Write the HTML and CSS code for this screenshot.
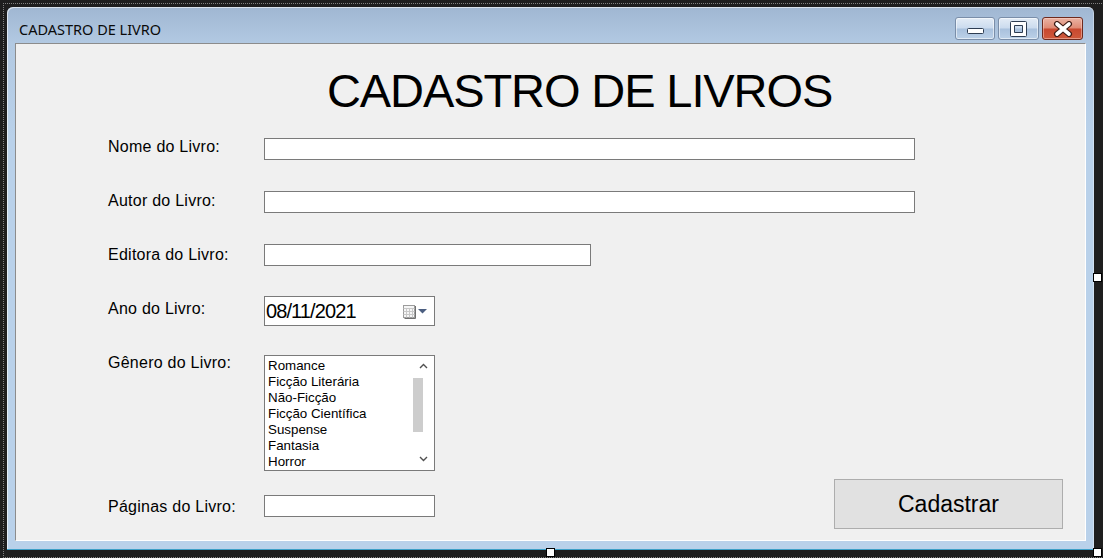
FILE: index.html
```html
<!DOCTYPE html>
<html lang="pt-BR">

<head>
    <meta charset="UTF-8">
    <meta name="viewport" content="width=device-width, initial-scale=1.0">
    <title>Cadastro de Livro</title>
    <link rel="stylesheet" href="styles.css">
</head>

<body>
    <div class="designer">
        <div class="window">
            <div class="title-bar">
                <span class="title-text">CADASTRO DE LIVRO</span>
                <div class="window-buttons">
                    <button class="win-btn win-min" aria-label="Minimizar">
                        <svg width="17" height="6" viewBox="0 0 17 6">
                            <rect x="0.5" y="0.5" width="16" height="5" rx="1" fill="#fff" stroke="#2e3d52"/>
                        </svg>
                    </button>
                    <button class="win-btn win-max" aria-label="Maximizar">
                        <svg width="17" height="16" viewBox="0 0 17 16">
                            <path d="M1.5 0.5h14a1 1 0 0 1 1 1v13a1 1 0 0 1 -1 1h-14a1 1 0 0 1 -1 -1v-13a1 1 0 0 1 1 -1z M4.5 4.5v7h8v-7z"
                                  fill="#fff" fill-rule="evenodd" stroke="#2e3d52"/>
                        </svg>
                    </button>
                    <button class="win-btn win-close" aria-label="Fechar">
                        <svg width="20" height="16" viewBox="0 0 20 16">
                            <path d="M4 3 L16 13 M16 3 L4 13" stroke="#3b1a14" stroke-width="6" stroke-linecap="round"/>
                            <path d="M4 3 L16 13 M16 3 L4 13" stroke="#fff" stroke-width="3.6" stroke-linecap="round"/>
                        </svg>
                    </button>
                </div>
            </div>

            <div class="client">
                <h1 class="form-title">CADASTRO DE LIVROS</h1>

                <div class="form">
                    <div class="form-row row-nome">
                        <label class="field-label" for="nome">Nome do Livro:</label>
                        <input class="text-box box-wide" id="nome" type="text">
                    </div>

                    <div class="form-row row-autor">
                        <label class="field-label" for="autor">Autor do Livro:</label>
                        <input class="text-box box-wide" id="autor" type="text">
                    </div>

                    <div class="form-row row-editora">
                        <label class="field-label" for="editora">Editora do Livro:</label>
                        <input class="text-box box-medium" id="editora" type="text">
                    </div>

                    <div class="form-row row-ano">
                        <label class="field-label">Ano do Livro:</label>
                        <div class="date-picker">
                            <span class="date-value">08/11/2021</span>
                            <svg class="date-icon" width="24" height="14" viewBox="0 0 24 14">
                                <rect x="0.5" y="0.5" width="11" height="12" fill="#f6f6f6" stroke="#9c9c9c"/>
                                <path d="M0.5 3.5h11 M0.5 6.5h11 M0.5 9.5h11 M3.5 3.5v9 M6.5 3.5v9 M9.5 3.5v9" stroke="#c8c8c8"/>
                                <path d="M12.5 1v12.5h-11" fill="none" stroke="#707070"/>
                                <polygon points="15,4 24,4 19.5,8.5" fill="#4b5e80"/>
                            </svg>
                        </div>
                    </div>

                    <div class="form-row row-genero">
                        <label class="field-label">Gênero do Livro:</label>
                        <div class="list-box">
                            <ul class="list-items">
                                <li>Romance</li>
                                <li>Ficção Literária</li>
                                <li>Não-Ficção</li>
                                <li>Ficção Científica</li>
                                <li>Suspense</li>
                                <li>Fantasia</li>
                                <li>Horror</li>
                            </ul>
                            <div class="scroll-bar">
                                <div class="scroll-arrow scroll-up">
                                    <svg width="9" height="6" viewBox="0 0 9 6">
                                        <polyline points="1,5 4.5,1.5 8,5" fill="none" stroke="#505050" stroke-width="1.4"/>
                                    </svg>
                                </div>
                                <div class="scroll-track">
                                    <div class="scroll-thumb"></div>
                                </div>
                                <div class="scroll-arrow scroll-down">
                                    <svg width="9" height="6" viewBox="0 0 9 6">
                                        <polyline points="1,1 4.5,4.5 8,1" fill="none" stroke="#505050" stroke-width="1.4"/>
                                    </svg>
                                </div>
                            </div>
                        </div>
                    </div>

                    <div class="form-row row-paginas">
                        <label class="field-label" for="paginas">Páginas do Livro:</label>
                        <input class="text-box box-small" id="paginas" type="text">
                        <button class="submit-button">Cadastrar</button>
                    </div>
                </div>
            </div>
        </div>

        <!-- resize grips of the selected form -->
        <span class="grip grip-right"></span>
        <span class="grip grip-bottom"></span>
        <span class="grip grip-corner"></span>
    </div>
</body>
</html>
```

FILE: styles.css
```css
html,
body {
    margin: 0;
    padding: 0;
}

body {
    width: 1103px;
    height: 558px;
    overflow: hidden;
    background-color: #1e1e1e;
    font-family: 'Liberation Sans', Arial, sans-serif;
}

/* dotted selection frame around the form */
.designer {
    position: relative;
    width: 1093px;
    height: 548px;
    margin: 3px 0 0 3px;
    padding: 3px 3px 2px 3px;
    border: 1px dotted #808080;
    box-sizing: content-box;
}

.window {
    width: 1087px;
    height: 543px;
    box-sizing: border-box;
    padding: 0 8px 8px 8px;
    border-bottom: 1px solid #3d9fc7;
    border-radius: 6px 6px 0 0;
    background: linear-gradient(#a0b7d2 0px, #b2c9e2 36px, #b9d1ea 130px, #b9d1ea 100%);
    box-shadow: inset 1px 1px 0 rgba(255, 255, 255, 0.6), inset -1px 0 0 rgba(255, 255, 255, 0.35);
    display: flex;
    flex-direction: column;
}

.title-bar {
    height: 36px;
    display: flex;
    align-items: flex-start;
    padding-left: 4px;
    flex-shrink: 0;
}

.title-text {
    margin-top: 12px;
    font-family: 'Noto Sans', sans-serif;
    font-size: 14.5px;
    line-height: 20px;
    color: #0a0a0a;
}

.window-buttons {
    display: flex;
    gap: 3px;
    margin-left: auto;
    margin-right: 3px;
    margin-top: 10px;
}

.win-btn {
    width: 40px;
    height: 23px;
    padding: 0;
    border: 1px solid #7a8ea9;
    border-radius: 3px;
    display: flex;
    align-items: center;
    justify-content: center;
    background: linear-gradient(#e3ecf6 0%, #cbdbee 48%, #a9c1dd 52%, #bcd1e8 100%);
    box-shadow: inset 0 0 0 1px rgba(255, 255, 255, 0.55);
}

.win-max,
.win-close {
    width: 41px;
}

.win-min svg {
    margin-top: 4px;
}

.win-close {
    border-color: #6e2a1e;
    background: linear-gradient(#eab3a4 0%, #df8a74 48%, #c8482f 52%, #cf5a3c 100%);
    box-shadow: inset 0 0 0 1px rgba(255, 220, 210, 0.45);
}

.client {
    flex: 1;
    background-color: #f0f0f0;
    border-left: 1px solid #8c8c8c;
    border-top: 1px solid #8c8c8c;
    border-right: 1px solid #ffffff;
    border-bottom: 1px solid #ffffff;
    padding-top: 20px;
}

.form-title {
    margin: 0 0 20px 0;
    padding-left: 311px;
    font-size: 47px;
    line-height: 54px;
    font-weight: normal;
    letter-spacing: -1.1px;
    color: #000;
}

.form {
    display: grid;
    grid-template-rows: 53px 53px 52px 58px 125px auto;
    padding-left: 92px;
}

.form-row {
    display: flex;
    align-items: flex-start;
}

.field-label {
    width: 156px;
    flex-shrink: 0;
    font-size: 16px;
    line-height: 18px;
    letter-spacing: 0.25px;
    color: #000;
}

.row-autor .field-label {
    margin-top: 1px;
}

.row-editora .field-label {
    margin-top: 2px;
}

.row-ano .field-label {
    margin-top: 4px;
}

.row-genero .list-box {
    margin-top: 1px;
}

.row-paginas .field-label {
    margin-top: 19px;
}

.row-paginas .text-box {
    margin-top: 16px;
}

.text-box {
    height: 22px;
    box-sizing: border-box;
    margin: 0;
    padding: 0 2px;
    border: 1px solid #7a7a7a;
    background-color: #fff;
    font-family: 'Liberation Sans', Arial, sans-serif;
    font-size: 16px;
    outline: none;
}

.box-wide {
    width: 651px;
}

.box-medium {
    width: 327px;
}

.box-small {
    width: 171px;
}

.date-picker {
    width: 171px;
    height: 30px;
    box-sizing: border-box;
    border: 1px solid #7a7a7a;
    background-color: #fff;
    display: flex;
    align-items: center;
    padding-left: 1px;
}

.date-value {
    font-size: 20px;
    letter-spacing: -0.9px;
    color: #000;
}

.date-icon {
    margin-left: auto;
    margin-right: 7px;
    margin-top: 2px;
}

.list-box {
    width: 171px;
    height: 116px;
    box-sizing: border-box;
    border: 1px solid #7a7a7a;
    background-color: #fff;
    display: flex;
}

.list-items {
    flex: 1;
    margin: 0;
    padding: 2px 0 0 3px;
    list-style: none;
    overflow: hidden;
    font-size: 13.33px;
    line-height: 16px;
    color: #000;
}

.scroll-bar {
    width: 21px;
    display: flex;
    flex-direction: column;
}

.scroll-arrow {
    display: flex;
    align-items: center;
    justify-content: center;
}

.scroll-up {
    height: 20px;
}

.scroll-down {
    height: 22px;
}

.scroll-track {
    flex: 1;
    padding-top: 2px;
}

.scroll-thumb {
    width: 10px;
    height: 54px;
    background-color: #cdcdcd;
}

.submit-button {
    width: 229px;
    height: 50px;
    margin-left: auto;
    margin-right: 22px;
    padding: 0;
    border: 1px solid #adadad;
    background-color: #e1e1e1;
    font-family: 'Liberation Sans', Arial, sans-serif;
    font-size: 23px;
    color: #000;
}

.grip {
    position: absolute;
    width: 7px;
    height: 7px;
    background-color: #fff;
    border: 1px solid #000;
}

.grip-right {
    left: 1089px;
    top: 269px;
}

.grip-bottom {
    left: 542px;
    top: 544px;
}

.grip-corner {
    left: 1089px;
    top: 544px;
}
```
